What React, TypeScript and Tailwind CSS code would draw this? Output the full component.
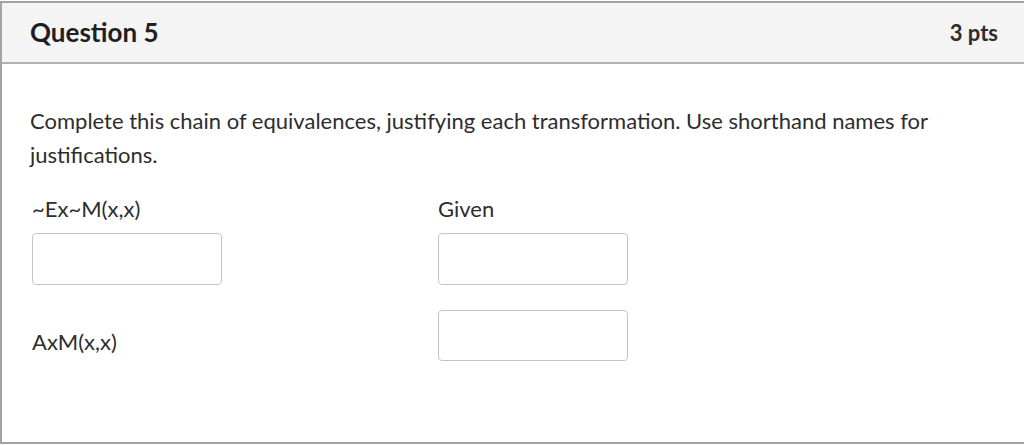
import React from 'react';

export default function App() {
  return (
    <div className="w-[1024px] h-[445px] overflow-hidden bg-white pt-px font-['Lato',sans-serif] text-[#2d2d2d]">
      <div className="w-[1040px] h-[443px] border-2 border-[#a3a3a3] bg-white">
        {/* Header */}
        <div className="flex items-center justify-between h-[61px] bg-[#f4f4f4] border-b-2 border-[#b0b0b0] pl-[28px] pr-[40px]">
          <h2 className="text-[26px] font-bold text-[#1f1f1f]">Question 5</h2>
          <span className="text-[22px] font-bold text-[#2d2d2d]">3 pts</span>
        </div>

        {/* Body */}
        <div className="pl-[28px] pt-[40px]">
          <p className="text-[22px] leading-[34px] w-[930px]">
            Complete this chain of equivalences, justifying each transformation. Use shorthand names for justifications.
          </p>

          <div className="grid grid-cols-[406px_1fr] mt-[20px] pl-[2px] text-[22px] leading-[34px]">
            <div>~Ex~M(x,x)</div>
            <div>Given</div>

            <div className="pt-[7px]">
              <input type="text" className="w-[190px] h-[52px] rounded-[4px] border border-[#c4c4c4] bg-white" />
            </div>
            <div className="pt-[7px]">
              <input type="text" className="w-[190px] h-[52px] rounded-[4px] border border-[#c4c4c4] bg-white" />
            </div>

            <div className="pt-[40px]">AxM(x,x)</div>
            <div className="pt-[25px]">
              <input type="text" className="w-[190px] h-[51px] rounded-[4px] border border-[#c4c4c4] bg-white" />
            </div>
          </div>
        </div>
      </div>
    </div>
  );
}
